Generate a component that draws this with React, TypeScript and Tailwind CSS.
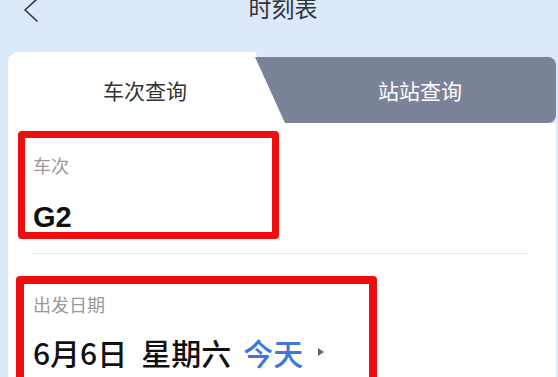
const cjk = "font-['Noto_Sans_CJK_SC','Noto_Sans',sans-serif]";

function BackIcon() {
  return (
    <svg className="absolute left-[22px] -top-[2px] w-[18px] h-[25px]" viewBox="0 0 18 25" fill="none">
      <polyline points="15,1 3,12 15,23" stroke="#333" strokeWidth="1.6" strokeLinecap="round" strokeLinejoin="round" />
    </svg>
  );
}

export default function App() {
  return (
    <div className={`w-[558px] h-[377px] overflow-hidden bg-[#dce9fa] ${cjk}`}>
      {/* header */}
      <div className="relative h-[52px] flex justify-center">
        <BackIcon />
        <h1 className="-mt-[7px] ml-[8px] text-[23px] leading-[28px] text-[#333]">时刻表</h1>
      </div>

      {/* card */}
      <div className="ml-[8px] w-[548px]">
        {/* tabs */}
        <div className="flex h-[71px]">
          <div className="w-[277px] shrink-0 bg-white rounded-tl-[10px] [clip-path:polygon(0_0,247px_0,277px_100%,0_100%)] flex items-center pl-[95px] pt-[6px]">
            <span className="text-[21px] text-[#333]">车次查询</span>
          </div>
          <div className="-ml-[30px] mt-[5px] flex-1 bg-[#7b8399] rounded-tr-[8px] rounded-br-[8px] [clip-path:polygon(0_0,100%_0,100%_100%,30px_100%)] flex items-center pl-[123px] pt-[2px]">
            <span className="text-[21px] text-white">站站查询</span>
          </div>
        </div>

        {/* body */}
        <div className="bg-white pt-[8px] h-[260px]">
          <div className="ml-[10px] w-[261px] h-[108px] border-[7px] border-[#f00d0d] rounded-[4px] pl-[8px] pt-[15px]">
            <div className="text-[18px] leading-[24px] text-[#999]">车次</div>
            <div className="mt-[24px] text-[29px] leading-[32px] font-bold text-[#111] font-['Liberation_Sans',sans-serif]">G2</div>
          </div>

          <div className="ml-[24px] mr-[28px] mt-[14px] h-px bg-[#e6e6e6]" />

          <div className="ml-[8px] mt-[22px] w-[361px] h-[130px] border-[8px] border-[#f00d0d] rounded-[4px] pl-[9px] pt-[8px]">
            <div className="text-[18px] leading-[24px] text-[#999]">出发日期</div>
            <div className="mt-[18px] flex items-center text-[30px] leading-[36px] font-medium text-[#111]">
              <span>6月6日</span>
              <span className="ml-[14px]">星期六</span>
              <span className="ml-[12px] text-[#3b78d9]">今天</span>
              <span className="ml-[15px] w-0 h-0 border-y-[4px] border-y-transparent border-l-[6px] border-l-[#666]" />
            </div>
          </div>
        </div>
      </div>
    </div>
  );
}
